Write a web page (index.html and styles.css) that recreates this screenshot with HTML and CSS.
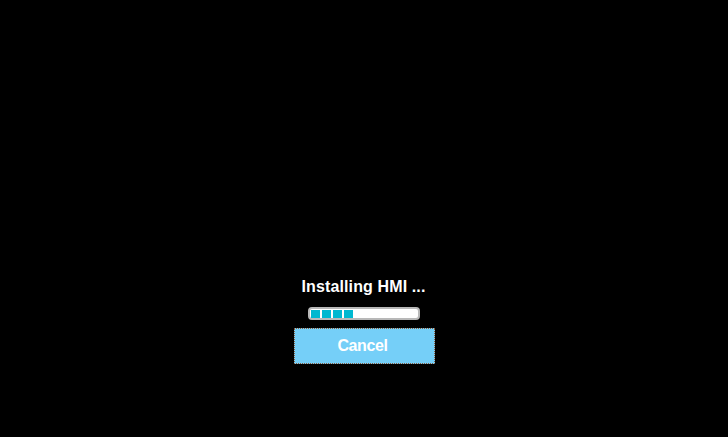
FILE: index.html
```html
<!DOCTYPE html>
<html>
<head>
<meta charset="utf-8">
<link rel="stylesheet" href="styles.css">
</head>
<body>
<div class="screen">
  <div class="dialog">
    <div class="title">Installing HMI ...</div>
    <div class="progress">
      <span class="seg"></span><span class="seg"></span><span class="seg"></span><span class="seg"></span>
    </div>
    <button class="cancel">Cancel</button>
  </div>
</div>
</body>
</html>
```
FILE: styles.css
```css
html, body {
  margin: 0;
  padding: 0;
  background: #000;
}
.screen {
  width: 728px;
  height: 437px;
  display: flex;
  justify-content: center;
  background: #000;
  font-family: "Liberation Sans", Arial, sans-serif;
}
.dialog {
  margin-top: 277px;
  display: flex;
  flex-direction: column;
  align-items: center;
  width: 141px;
  margin-left: 1px;
}
.title {
  color: #fff;
  font-weight: bold;
  font-size: 16px;
  line-height: 19px;
  height: 19px;
  white-space: nowrap;
  letter-spacing: 0.12px;
  margin-left: -2px;
}
.progress {
  margin-top: 11px;
  box-sizing: border-box;
  width: 112px;
  height: 13px;
  border: 2px solid #b8b8b8;
  border-radius: 4px;
  background: #fff;
  display: flex;
  gap: 2px;
  padding: 1px 0 0 1px;
  margin-left: -2px;
}
.seg {
  width: 9px;
  height: 8px;
  background: #00b8d0;
}
.cancel {
  margin-top: 8px;
  box-sizing: border-box;
  width: 141px;
  height: 36px;
  background: #75cff8;
  border: 1px dotted #8a5a3a;
  color: #fff;
  font-family: "Liberation Sans", Arial, sans-serif;
  font-weight: bold;
  font-size: 16px;
  letter-spacing: -0.4px;
  padding: 0 4px 0 0;
}
```
